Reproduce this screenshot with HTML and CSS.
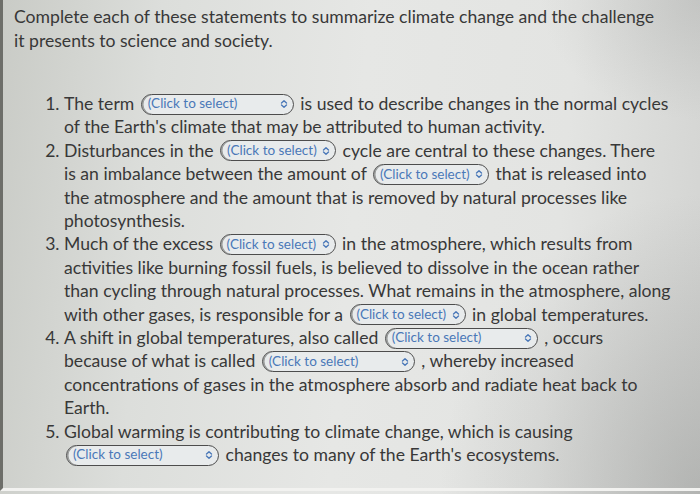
FILE: index.html
```html
<!DOCTYPE html>
<html>
<head>
<meta charset="utf-8">
<link rel="stylesheet" href="styles.css">
</head>
<body>
<div class="page">
  <p class="intro">Complete each of these statements to summarize climate change and the challenge it presents to science and society.</p>
  <ol class="items">
    <li>The term <span class="sel wide"><span class="lbl">(Click to select)</span><svg class="ico" viewBox="0 0 10 10"><path d="M2.5 4 L5 1.8 L7.5 4 M2.5 6 L5 8.2 L7.5 6" fill="none" stroke="#4a78b8" stroke-width="1.4" stroke-linecap="round" stroke-linejoin="round"/></svg></span> is used to describe changes in the normal cycles of the Earth's climate that may be attributed to human activity.</li>
    <li>Disturbances in the <span class="sel"><span class="lbl">(Click to select)</span><svg class="ico" viewBox="0 0 10 10"><path d="M2.5 4 L5 1.8 L7.5 4 M2.5 6 L5 8.2 L7.5 6" fill="none" stroke="#4a78b8" stroke-width="1.4" stroke-linecap="round" stroke-linejoin="round"/></svg></span> cycle are central to these changes. There<br>is an imbalance between the amount of <span class="sel"><span class="lbl">(Click to select)</span><svg class="ico" viewBox="0 0 10 10"><path d="M2.5 4 L5 1.8 L7.5 4 M2.5 6 L5 8.2 L7.5 6" fill="none" stroke="#4a78b8" stroke-width="1.4" stroke-linecap="round" stroke-linejoin="round"/></svg></span> that is released into the atmosphere and the amount that is removed by natural processes like photosynthesis.</li>
    <li>Much of the excess <span class="sel"><span class="lbl">(Click to select)</span><svg class="ico" viewBox="0 0 10 10"><path d="M2.5 4 L5 1.8 L7.5 4 M2.5 6 L5 8.2 L7.5 6" fill="none" stroke="#4a78b8" stroke-width="1.4" stroke-linecap="round" stroke-linejoin="round"/></svg></span> in the atmosphere, which results from activities like burning fossil fuels, is believed to dissolve in the ocean rather than cycling through natural processes. What remains in the atmosphere, along with other gases, is responsible for a <span class="sel"><span class="lbl">(Click to select)</span><svg class="ico" viewBox="0 0 10 10"><path d="M2.5 4 L5 1.8 L7.5 4 M2.5 6 L5 8.2 L7.5 6" fill="none" stroke="#4a78b8" stroke-width="1.4" stroke-linecap="round" stroke-linejoin="round"/></svg></span> in global temperatures.</li>
    <li>A shift in global temperatures, also called <span class="sel wide"><span class="lbl">(Click to select)</span><svg class="ico" viewBox="0 0 10 10"><path d="M2.5 4 L5 1.8 L7.5 4 M2.5 6 L5 8.2 L7.5 6" fill="none" stroke="#4a78b8" stroke-width="1.4" stroke-linecap="round" stroke-linejoin="round"/></svg></span> , occurs<br>because of what is called <span class="sel wide"><span class="lbl">(Click to select)</span><svg class="ico" viewBox="0 0 10 10"><path d="M2.5 4 L5 1.8 L7.5 4 M2.5 6 L5 8.2 L7.5 6" fill="none" stroke="#4a78b8" stroke-width="1.4" stroke-linecap="round" stroke-linejoin="round"/></svg></span> , whereby increased concentrations of gases in the atmosphere absorb and radiate heat back to Earth.</li>
    <li>Global warming is contributing to climate change, which is causing <span class="sel wide"><span class="lbl">(Click to select)</span><svg class="ico" viewBox="0 0 10 10"><path d="M2.5 4 L5 1.8 L7.5 4 M2.5 6 L5 8.2 L7.5 6" fill="none" stroke="#4a78b8" stroke-width="1.4" stroke-linecap="round" stroke-linejoin="round"/></svg></span> changes to many of the Earth's ecosystems.</li>
  </ol>
</div>
</body>
</html>
```
FILE: styles.css
```css
html, body {
  margin: 0;
  padding: 0;
  height: 100%;
}
body {
  width: 700px;
  height: 494px;
  overflow: hidden;
  background:
    radial-gradient(ellipse 260px 300px at 100% 100%, rgba(120, 122, 120, 0.35), rgba(120, 122, 120, 0) 100%),
    radial-gradient(ellipse 160px 120px at 100% 0%, rgba(140, 142, 140, 0.25), rgba(140, 142, 140, 0) 100%),
    linear-gradient(95deg, #c9cbc6 0%, #dcdedb 22%, #e6e7e5 50%, #e3e4e2 78%, #d2d3d1 100%);
  font-family: Lato, "Open Sans", sans-serif;
  color: #383838;
}
.page {
  height: 491px;
  box-sizing: border-box;
  border-left: 3px solid #6d6e69;
  border-bottom: 3px solid #f2f2f0;
  padding: 5px 0 0 11px;
}
.intro {
  margin: 0;
  font-size: 17.6px;
  line-height: 24px;
  width: 650px;
}
.items {
  margin: 39px 0 0 0;
  padding-left: 50px;
  width: 611px;
  font-size: 17.6px;
  line-height: 23.4px;
}
.sel {
  display: inline-flex;
  align-items: center;
  justify-content: space-between;
  box-sizing: border-box;
  width: 116px;
  height: 21px;
  vertical-align: middle;
  margin: -3px 2px 0;
  border: 1.5px solid #4d4d4d;
  border-radius: 10.5px;
  background: #e8ebec;
  box-shadow: inset 1.5px 0 0 #9a9c9b;
  padding: 0 4px 0 6px;
  line-height: 1;
}
.sel.wide {
  width: 153px;
}
.lbl {
  font-size: 13.5px;
  color: #4a78b8;
}
.ico {
  width: 10px;
  height: 10px;
}
```
